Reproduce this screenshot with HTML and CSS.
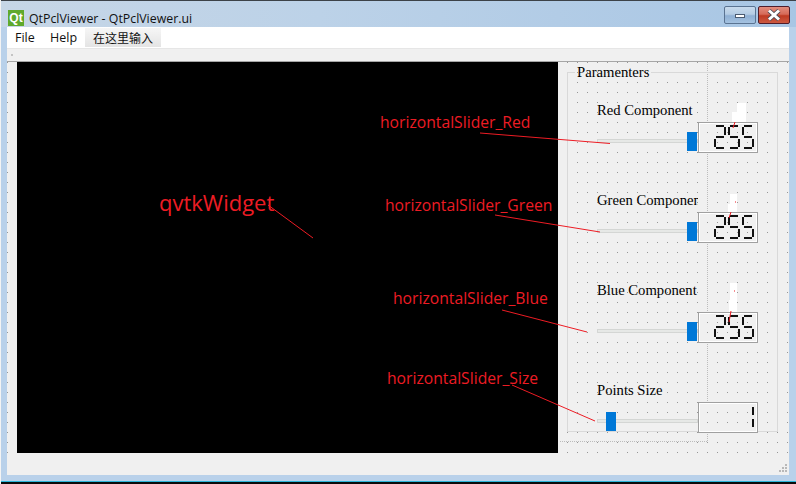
FILE: index.html
```html
<!DOCTYPE html>
<html lang="en">
<head>
    <meta charset="UTF-8">
    <title>QtPclViewer - QtPclViewer.ui</title>
    <link rel="stylesheet" href="styles.css">
</head>
<body>

    <!-- seven segment shapes for the LCD numbers -->
    <svg class="defs" width="0" height="0">
        <defs>
            <g id="seg-top"><rect x="2" y="0" width="8" height="2"/></g>
            <g id="seg-mid"><rect x="2" y="11" width="8" height="2"/></g>
            <g id="seg-bot"><rect x="2" y="22" width="8" height="2"/></g>
            <g id="seg-ul"><rect x="0" y="2" width="2" height="8"/></g>
            <g id="seg-ur"><rect x="10" y="2" width="2" height="8"/></g>
            <g id="seg-ll"><rect x="0" y="14" width="2" height="8"/></g>
            <g id="seg-lr"><rect x="10" y="14" width="2" height="8"/></g>
            <g id="num-2"><use href="#seg-top"/><use href="#seg-ur"/><use href="#seg-mid"/><use href="#seg-ll"/><use href="#seg-bot"/></g>
            <g id="num-5"><use href="#seg-top"/><use href="#seg-ul"/><use href="#seg-mid"/><use href="#seg-lr"/><use href="#seg-bot"/></g>
            <g id="num-1"><use href="#seg-ur"/><use href="#seg-lr"/></g>
        </defs>
    </svg>

    <div class="window">
        <div class="titlebar">
            <div class="qt-logo">Qt</div>
            <div class="title-text">QtPclViewer - QtPclViewer.ui</div>
            <div class="win-buttons">
                <div class="win-btn btn-min"><span class="min-bar"></span></div>
                <div class="win-btn btn-close">
                    <svg width="18" height="12" viewBox="0 0 18 12">
                        <path d="M4 1.5 L14 10.5 M14 1.5 L4 10.5" stroke="#4a4a55" stroke-width="4.4" fill="none"/>
                        <path d="M4 1.5 L14 10.5 M14 1.5 L4 10.5" stroke="#fff" stroke-width="3" fill="none"/>
                    </svg>
                </div>
            </div>
        </div>

        <div class="client">
            <div class="menubar">
                <span class="menu-item">File</span>
                <span class="menu-item">Help</span>
                <span class="menu-input">在这里输入</span>
            </div>
            <div class="toolbar"><span class="tool-grip"></span></div>

            <div class="central">
                <div class="layout-line-v"></div>
                <div class="layout-line-h"></div>

                <div class="qvtk"></div>

                <fieldset class="params">
                    <legend>Paramenters</legend>

                    <div class="param">
                        <div class="param-label">Red Component</div>
                        <div class="param-controls">
                            <div class="slider"><span class="slider-handle" style="left: 89px"></span></div>
                            <div class="lcd">
                                <svg class="digit" viewBox="0 0 12 24"><use href="#num-2"/></svg>
                                <svg class="digit" viewBox="0 0 12 24"><use href="#num-5"/></svg>
                                <svg class="digit" viewBox="0 0 12 24"><use href="#num-5"/></svg>
                            </div>
                        </div>
                    </div>

                    <div class="param">
                        <div class="param-label">Green Component</div>
                        <div class="param-controls">
                            <div class="slider"><span class="slider-handle" style="left: 89px"></span></div>
                            <div class="lcd">
                                <svg class="digit" viewBox="0 0 12 24"><use href="#num-2"/></svg>
                                <svg class="digit" viewBox="0 0 12 24"><use href="#num-5"/></svg>
                                <svg class="digit" viewBox="0 0 12 24"><use href="#num-5"/></svg>
                            </div>
                        </div>
                    </div>

                    <div class="param param-tall">
                        <div class="param-label">Blue Component</div>
                        <div class="param-controls">
                            <div class="slider"><span class="slider-handle" style="left: 89px"></span></div>
                            <div class="lcd">
                                <svg class="digit" viewBox="0 0 12 24"><use href="#num-2"/></svg>
                                <svg class="digit" viewBox="0 0 12 24"><use href="#num-5"/></svg>
                                <svg class="digit" viewBox="0 0 12 24"><use href="#num-5"/></svg>
                            </div>
                        </div>
                    </div>

                    <div class="param">
                        <div class="param-label">Points Size</div>
                        <div class="param-controls">
                            <div class="slider"><span class="slider-handle" style="left: 8px"></span></div>
                            <div class="lcd">
                                <svg class="digit" viewBox="0 0 12 24"><use href="#num-1"/></svg>
                            </div>
                        </div>
                    </div>
                </fieldset>
            </div>

            <div class="statusbar">
                <svg class="size-grip" width="9" height="9" viewBox="0 0 9 9">
                    <rect x="6" y="0" width="2" height="2"/>
                    <rect x="3" y="3" width="2" height="2"/>
                    <rect x="6" y="3" width="2" height="2"/>
                    <rect x="0" y="6" width="2" height="2"/>
                    <rect x="3" y="6" width="2" height="2"/>
                    <rect x="6" y="6" width="2" height="2"/>
                </svg>
            </div>
        </div>
    </div>

    <!-- red notes someone drew on top of the designer screenshot -->
    <svg class="notes-lines" width="796" height="484" viewBox="0 0 796 484">
        <g fill="#fff">
            <path d="M737 103 H746 V122 H732 V112 H737 Z"/>
            <path d="M730 194 H737 V212 H728 V204 H730 Z"/>
            <path d="M730 283 H737 V312 H729 V300 H730 Z"/>
        </g>
        <g stroke="#ed1c24" stroke-width="1" fill="none">
            <path d="M480 133 L610 143.5"/>
            <path d="M495 215 L600 232"/>
            <path d="M502 310 L587 332"/>
            <path d="M512 385 L595 421"/>
            <path d="M268 205 L313 238"/>
            <path d="M735 122 L733 128"/>
            <path d="M731 212 L729 218"/>
            <path d="M731 311 L729 322"/>
            <path d="M735 202 h1"/>
            <path d="M734 291 h1"/>
        </g>
    </svg>
    <div class="note note-big" style="left: 159px; top: 188px">qvtkWidget</div>
    <div class="note" style="left: 380px; top: 112px">horizontalSlider_Red</div>
    <div class="note" style="left: 385px; top: 195px">horizontalSlider_Green</div>
    <div class="note" style="left: 393px; top: 288px">horizontalSlider_Blue</div>
    <div class="note" style="left: 387px; top: 368px">horizontalSlider_Size</div>

</body>
</html>
```

FILE: styles.css
```css
html, body {
    margin: 0;
    padding: 0;
    background: #f4f4f4;
}

body {
    position: relative;
    width: 796px;
    height: 484px;
    overflow: hidden;
}

.defs {
    position: absolute;
}

.window {
    box-sizing: border-box;
    width: 795px;
    height: 484px;
    margin-left: 1px;
    padding: 0 7px 7px 6px;
    background: #b9d1ea;
    border-bottom: 2px solid #0b0b0b;
    box-shadow: inset 0 -1px 0 #2bb4d8;
    display: flex;
    flex-direction: column;
}

/* title bar */
.titlebar {
    flex: none;
    box-sizing: border-box;
    height: 27px;
    margin: 0 -7px 0 -6px;
    padding: 9px 6px 0 7px;
    border-top: 1px solid #3c4248;
    background: linear-gradient(90deg, #c6d6e6 0%, #bcd2e8 40%, #a8c6e4 100%);
    display: flex;
    align-items: flex-start;
}

.qt-logo {
    width: 16px;
    height: 16px;
    background: #5fa92c;
    color: #fff;
    font: bold 12px/16px "Liberation Sans", sans-serif;
    text-align: center;
}

.title-text {
    flex: 1;
    margin-left: 5px;
    font: 12.35px/17px "Open Sans", sans-serif;
    color: #111;
}

.win-buttons {
    display: flex;
    gap: 2px;
    margin-top: -4px;
}

.win-btn {
    box-sizing: border-box;
    width: 32px;
    height: 18px;
    border-radius: 2px;
    display: flex;
    align-items: center;
    justify-content: center;
}

.btn-min {
    border: 1px solid #5a7391;
    background: linear-gradient(#c8daec 0%, #b4cce4 45%, #8fb0d4 55%, #a4c2e0 100%);
}

.min-bar {
    width: 10px;
    height: 4px;
    background: #fff;
    border: 1px solid #4a5a70;
    box-sizing: border-box;
    margin-top: 2px;
}

.btn-close {
    border: 1px solid #4f1c2a;
    background: linear-gradient(#e28d7e 0%, #d66a58 45%, #bf3a22 55%, #cc5a42 100%);
}

/* client area */
.client {
    flex: 1;
    display: flex;
    flex-direction: column;
    background: #f0f0f0;
}

.menubar {
    flex: none;
    height: 21px;
    background: #fff;
    display: flex;
    align-items: center;
    font: 12.5px/19px "Open Sans", sans-serif;
    color: #111;
    padding-left: 8px;
}

.menu-item {
    width: 35px;
}

.menu-input {
    box-sizing: border-box;
    width: 76px;
    height: 19px;
    text-align: center;
    font: 12px/19px "Noto Sans CJK SC", sans-serif;
    background: linear-gradient(#f6f6f6, #e4e4e4);
}

.toolbar {
    flex: none;
    box-sizing: border-box;
    height: 13px;
    border-top: 1px solid #e6e6e6;
    background: #f0f0f0;
    padding: 5px 0 0 4px;
}

.tool-grip {
    display: block;
    width: 2px;
    height: 2px;
    background: #c4c4c4;
}

.central {
    flex: none;
    position: relative;
    box-sizing: border-box;
    height: 392px;
    border-top: 1px solid #a6a6a6;
    display: flex;
    align-items: flex-start;
    background-color: #f0f0f0;
    background-image: radial-gradient(circle at 0.5px 0.5px, #969696 0.6px, transparent 0.7px);
    background-size: 10px 10px;
    background-origin: padding-box;
}

.layout-line-v {
    position: absolute;
    left: 700px;
    top: 0;
    height: 379px;
    border-left: 1px dotted #bcbcbc;
}

.layout-line-h {
    position: absolute;
    left: 553px;
    top: 379px;
    width: 147px;
    border-top: 1px dotted #bcbcbc;
}

.qvtk {
    flex: none;
    width: 541px;
    height: 391px;
    margin-left: 10px;
    background: #000;
}

/* parameter group */
.params {
    flex: none;
    position: relative;
    box-sizing: border-box;
    width: 211px;
    height: 368px;
    min-width: 0;
    margin: 2px 0 0 9px;
    padding: 20px 0 0 29px;
    border: 1px solid #d9d9d9;
    font: 14.67px/20px "Liberation Serif", serif;
    color: #000;
}

.params legend {
    margin-left: -22px;
    padding: 0 2px;
    font-size: 14.67px;
    line-height: 16px;
}

.param {
    margin-bottom: 37px;
}

.param-label {
    width: 101px;
    height: 20px;
    overflow: hidden;
    white-space: nowrap;
    margin-bottom: 2px;
}

.param-tall .param-label {
    margin-bottom: 12px;
}

.param-controls {
    display: flex;
    align-items: flex-start;
}

.slider {
    position: relative;
    box-sizing: border-box;
    width: 101px;
    height: 4px;
    margin-top: 17px;
    background: #e6e8e6;
    border: 1px solid #d4d6d4;
}

.slider-handle {
    position: absolute;
    top: -8px;
    width: 10px;
    height: 19px;
    background: #0078d7;
}

.lcd {
    flex: none;
    box-sizing: border-box;
    width: 60px;
    height: 31px;
    padding: 2px 3px 0 0;
    border: 1px solid #a0a0a0;
    box-shadow: inset 0 0 0 1px #fff;
    background-color: #f0f0f0;
    background-image: radial-gradient(circle at 0.5px 0.5px, #969696 0.6px, transparent 0.7px);
    background-size: 10px 10px;
    background-position: 8px 9px;
    display: flex;
    justify-content: flex-end;
    gap: 2px;
}

.digit {
    width: 12px;
    height: 24px;
    fill: #111;
    shape-rendering: crispEdges;
}

.statusbar {
    flex: 1;
    display: flex;
    justify-content: flex-end;
    align-items: flex-end;
    padding: 0 1px 2px 0;
}

.size-grip {
    fill: #b8b8b8;
}

/* annotations over the screenshot */
.notes-lines {
    position: absolute;
    left: 0;
    top: 0;
}

.note {
    position: absolute;
    font: 15.7px/20px "Open Sans", sans-serif;
    color: #ed1c24;
    white-space: nowrap;
}

.note-big {
    font-size: 22px;
    line-height: 28px;
}
```
